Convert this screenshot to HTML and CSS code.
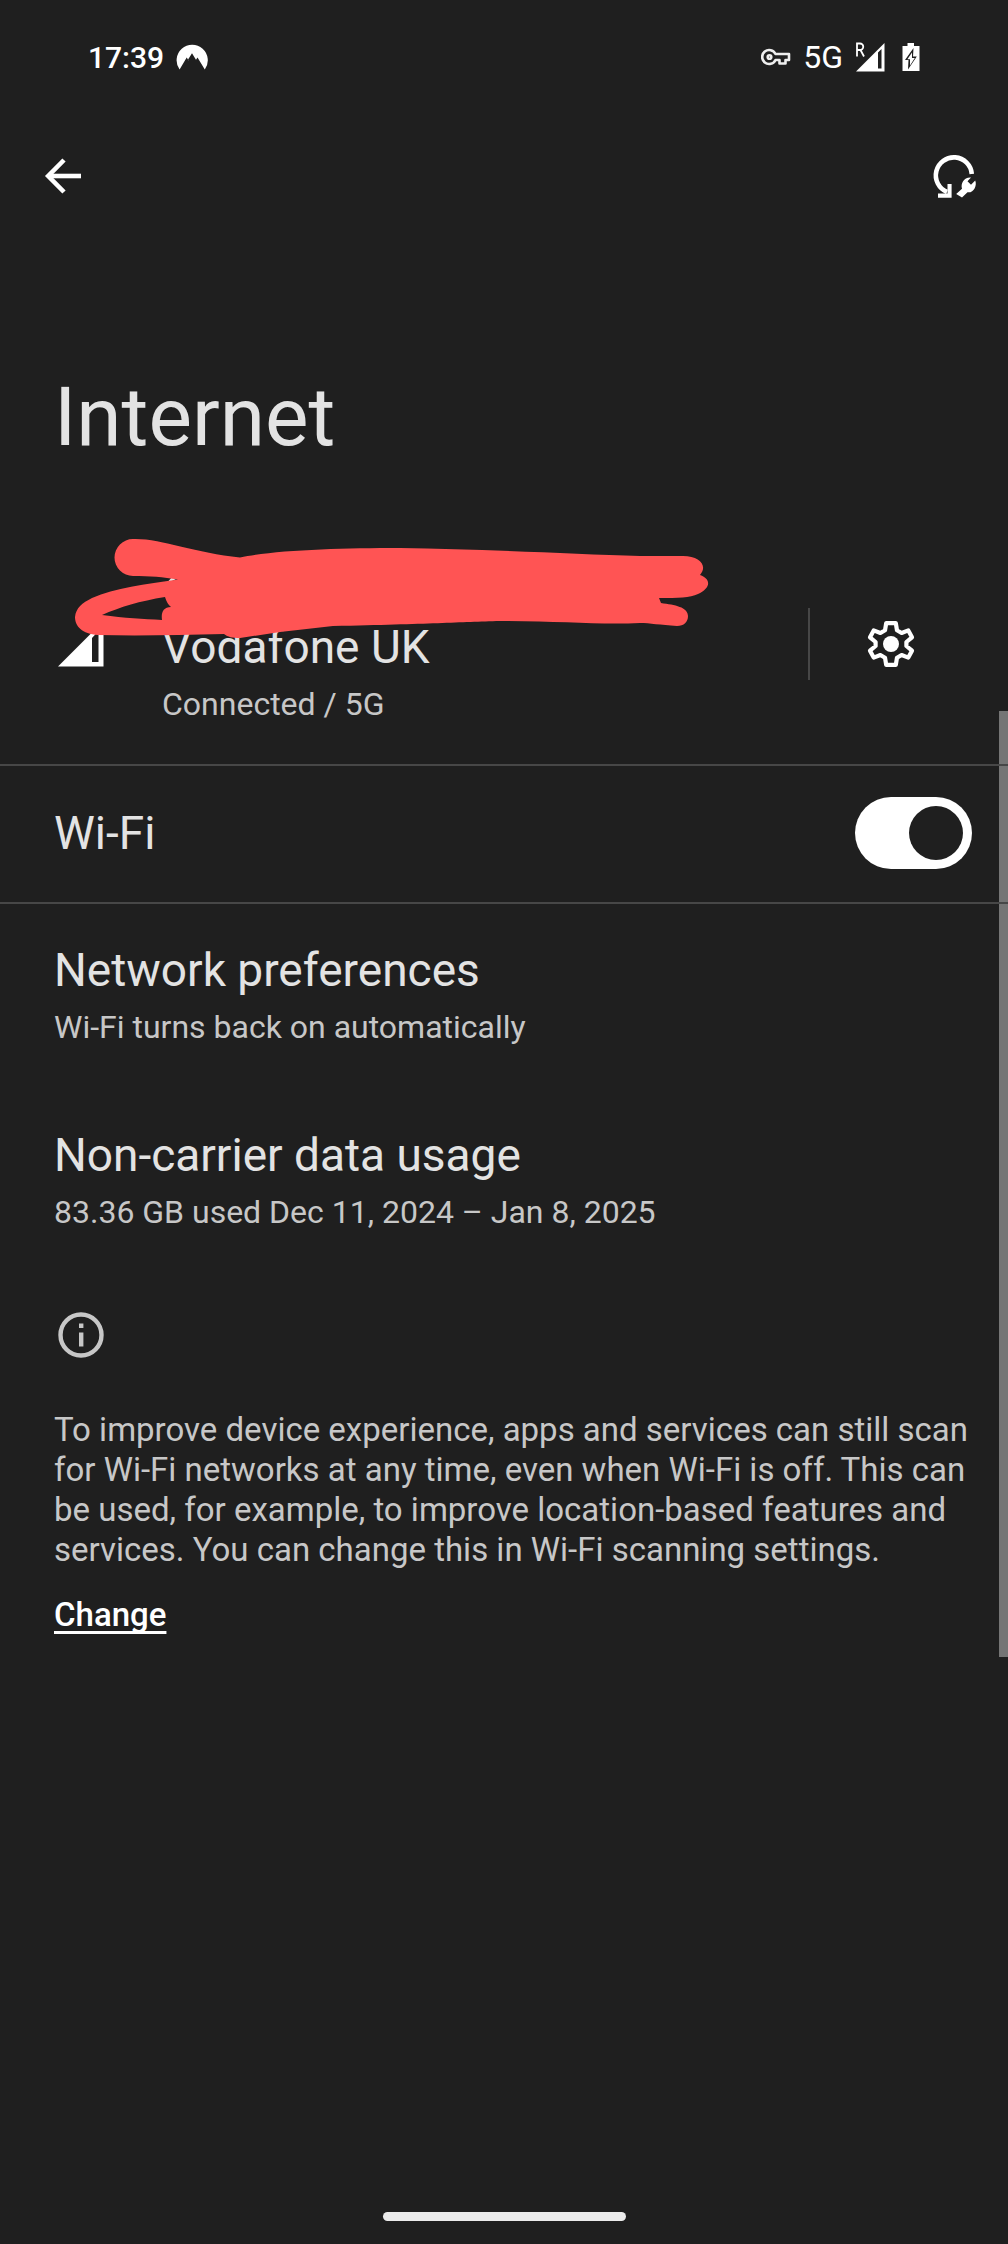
FILE: index.html
```html
<!DOCTYPE html>
<html lang="en">
<head>
<meta charset="utf-8">
<meta name="viewport" content="width=device-width, initial-scale=1">
<title>Internet</title>
<link rel="stylesheet" href="styles.css">
</head>
<body>
<div class="screen">
  <header class="status-bar">
    <div class="status-group">
      <time class="clock">17:39</time>
      <svg class="vpn-logo" width="32" height="26" viewBox="0 0 32 26" aria-hidden="true"><path fill="#fff" d="M3.6 25.5A15.6 15.6 0 1 1 28.8 25.5L21.5 13.4 20 15.7 21.5 18.2 16 9.3 11.9 15.8 13.4 17.8 10.7 13.6Z"/></svg>
    </div>
    <div class="status-group status-right">
      <svg class="key" width="30" height="20" viewBox="0 0 30 20" fill="none" stroke="#eee" stroke-width="2.6" stroke-linejoin="round" aria-hidden="true"><path d="M14.5 7A7 7 0 1 0 14.5 13H18.5V16.5H24.5V13H28V7Z"/><circle cx="8.5" cy="10" r="1.8"/></svg>
      <span class="network-type">5G</span>
      <svg class="roaming" width="30" height="30" viewBox="0 0 30 30" aria-hidden="true"><path fill="#fff" fill-rule="evenodd" d="M1 29.5 29.5 1V29.5ZM23 10.5V26.5H26.5V7Z"/><path d="M2 14.500V1.500H5A3.200 3.200 0 0 1 5 8H2M5.500 8 9 14.500" fill="none" stroke="#fff" stroke-width="1.800"/></svg>
      <svg class="battery" width="24" height="30" viewBox="-4 0 24 30" aria-hidden="true"><path fill="#fff" fill-rule="evenodd" d="M6.500 1H13V4H18.500V29H1.500V4H6.500ZM12.500 6 4 18H7.500L7 27.500 15.800 14.500H12Z"/><path fill="#fff" d="M11 10.500V16H13.800L9 23.500V17.200H6.400Z"/></svg>
    </div>
  </header>

  <nav class="app-bar" aria-label="Toolbar">
    <button class="icon-button" aria-label="Back"><svg width="38" height="38" viewBox="0 0 38 38" fill="none" stroke="#fff" stroke-width="4.600" aria-hidden="true"><path d="M37 19H5"/><path d="M20 3 4.200 19 20 35"/></svg></button>
    <button class="icon-button" aria-label="Reset internet"><svg width="48" height="48" viewBox="0 0 48 48" aria-hidden="true"><path fill="none" stroke="#fff" stroke-width="4.600" d="M39.800 22A18 18 0 1 0 15 40"/><path fill="#fff" d="M15.500 32H19.600V45.700H6V41.500H15.500ZM30 36.700C28.500 31.500 32 25 39 25.600L35.500 29.200 39 32.700 43.200 28.400C45.500 34 41 41.500 35.500 40.200L30 45.600 24.200 42Z"/></svg></button>
  </nav>

  <h1 class="page-title">Internet</h1>

  <main>
    <section class="carrier">
      <div class="carrier-icon"><svg width="46" height="46" viewBox="0 0 46 46" aria-hidden="true"><path fill="#fff" fill-rule="evenodd" d="M0 45.500 45.500 0V45.500ZM34 17V41H40.500V10Z"/></svg></div>
      <div class="carrier-text">
        <h2 class="row-title">Vodafone UK</h2>
        <p class="row-summary">Connected / 5G</p>
      </div>
      <div class="carrier-settings">
        <button class="icon-button" aria-label="Carrier settings"><svg width="54" height="54" viewBox="0 0 54 54" aria-hidden="true"><path fill="none" stroke="#fff" stroke-width="4.200" stroke-linejoin="round" d="M22.200 6.200H31.800L33 13.300 37.600 16 44.300 13.400 48 20.300 42.400 25V29L48 33.700 44.300 40.600 37.600 38 33 40.700 31.800 47.800H22.200L21 40.700 16.400 38 9.700 40.600 6 33.700 11.600 29V25L6 20.300 9.700 13.400 16.400 16 21 13.300Z"/><circle cx="27" cy="27" r="8" fill="#fff"/></svg></button>
      </div>
      <svg class="scribble" width="636" height="102" viewBox="74 538 636 102" aria-hidden="true"><path fill="#e3e3e3" d="M166 584 172 577 180 577Z"/><path fill="#ff5454" fill-rule="evenodd" d="M133 539C160 538 195 553 240 557.500C275 550 340 548 400 548C480 549 570 554 640 556H683C700 556 708 566 700 575C713 580 709 589 698 594C690 598 678 598 659 598L661 603C675 605 688 607 688 616C688 622 684 626 677 626C660 625 650 623 640 623C600 625 560 621 500 621C460 622 430 624 333 626L280 632 240 638C232 638 228 637 224 634C180 635 140 636 98 635C82 634 75 626 75 617C76 608 82 603 92 598C115 588 145 584 178 579.500C163 577 150 576 133 576A18.500 18.500 0 0 1 133 539ZM102 615C125 618 143 619 162 620C161 613 163 607 171 607Q167 604 165 597C140 601 120 607 102 615Z"/></svg>
    </section>

    <section class="wifi">
      <label class="row-title" for="wifi">Wi-Fi</label>
      <input class="switch" type="checkbox" role="switch" id="wifi" checked>
    </section>

    <section class="preference">
      <h2 class="row-title">Network preferences</h2>
      <p class="row-summary">Wi-Fi turns back on automatically</p>
    </section>
    <section class="preference">
      <h2 class="row-title">Non-carrier data usage</h2>
      <p class="row-summary">83.36 GB used Dec 11, 2024 – Jan 8, 2025</p>
    </section>

    <section class="footer-note">
      <svg width="54" height="54" viewBox="0 0 54 54" aria-hidden="true"><circle cx="27" cy="27" r="20.500" fill="none" stroke="#c7c7c7" stroke-width="4.400"/><path fill="#c7c7c7" d="M25 15.500H29.400V20H25ZM25 24.500H29.400V38.500H25Z"/></svg>
      <p class="note">To improve device experience, apps and services can still scan for Wi-Fi networks at any time, even when Wi-Fi is off. This can be used, for example, to improve location-based features and services. You can change this in Wi-Fi scanning settings.</p>
      <a class="change" href="#scanning">Change</a>
    </section>
  </main>

  <div class="scrollbar"></div>
  <div class="gesture-bar"></div>
</div>
</body>
</html>
```
FILE: styles.css
```css
* { box-sizing: border-box; }

body {
  margin: 0;
  background: #1f1f1f;
  color: #e3e3e3;
  font-family: Roboto, "Liberation Sans", sans-serif;
}

h1, h2, p { margin: 0; font-weight: 400; }
svg { display: block; flex: none; }

.screen {
  position: relative;
  isolation: isolate;
  display: flex;
  flex-direction: column;
  min-height: 100vh;
}

.status-bar {
  display: flex;
  justify-content: space-between;
  align-items: center;
  height: 114px;
  padding: 0 87px 0 88px;
  color: #fff;
  font-size: 32px;
}
.status-group { display: flex; align-items: center; gap: 12px; }
.clock { font-size: 30px; font-weight: 500; }

.app-bar {
  display: flex;
  justify-content: space-between;
  align-items: center;
  height: 124px;
  padding: 0 28px 0 44px;
}

.icon-button {
  display: flex;
  padding: 0;
  border: 0;
  background: none;
  color: inherit;
}

.page-title {
  margin: 131px 54px 0;
  font-size: 82px;
  line-height: 96px;
}

.row-title { font-size: 46px; line-height: 52px; }
.row-summary {
  margin-top: 9px;
  color: #c7c7c7;
  font-size: 32px;
  line-height: 44px;
}

.carrier {
  position: relative;
  display: flex;
  align-items: center;
  padding: 96px 54px 38px;
  border-bottom: 2px solid #474747;
}
.carrier-icon { width: 108px; padding-left: 4px; }
.carrier-text { flex: 1; padding-top: 60px; }
.carrier-settings {
  display: flex;
  align-items: center;
  justify-content: center;
  width: 146px;
  height: 72px;
  padding-left: 18px;
  border-left: 2px solid #474747;
}
.scribble { position: absolute; left: 74px; top: 73px; }

.wifi {
  display: flex;
  align-items: center;
  justify-content: space-between;
  padding: 31px 36px 33px 54px;
  border-bottom: 2px solid #474747;
}
.switch {
  appearance: none;
  display: flex;
  justify-content: flex-end;
  width: 117px;
  height: 72px;
  margin: 0;
  padding: 9px;
  border-radius: 36px;
  background: #fff;
}
.switch::before {
  content: "";
  width: 54px;
  height: 54px;
  border-radius: 50%;
  background: #1f1f1f;
}
.switch:not(:checked) { justify-content: flex-start; background: #8e8e8e; }

.preference { padding: 40px 54px; }

.footer-note {
  display: flex;
  flex-direction: column;
  align-items: flex-start;
  padding: 34px 30px 0 54px;
  color: #c7c7c7;
  font-size: 33px;
  line-height: 40px;
}
.note { margin-top: 48px; }
.change {
  margin-top: 25px;
  color: #fff;
  font-weight: 500;
  text-decoration-thickness: 3px;
  text-underline-offset: 5px;
  text-decoration-skip-ink: none;
}

.scrollbar {
  position: absolute;
  z-index: -1;
  top: 711px;
  right: 0;
  width: 9px;
  height: 946px;
  background: #757575;
}

.gesture-bar {
  align-self: center;
  width: 243px;
  height: 9px;
  margin: auto 0 23px;
  border-radius: 5px;
  background: #ececec;
}
```
